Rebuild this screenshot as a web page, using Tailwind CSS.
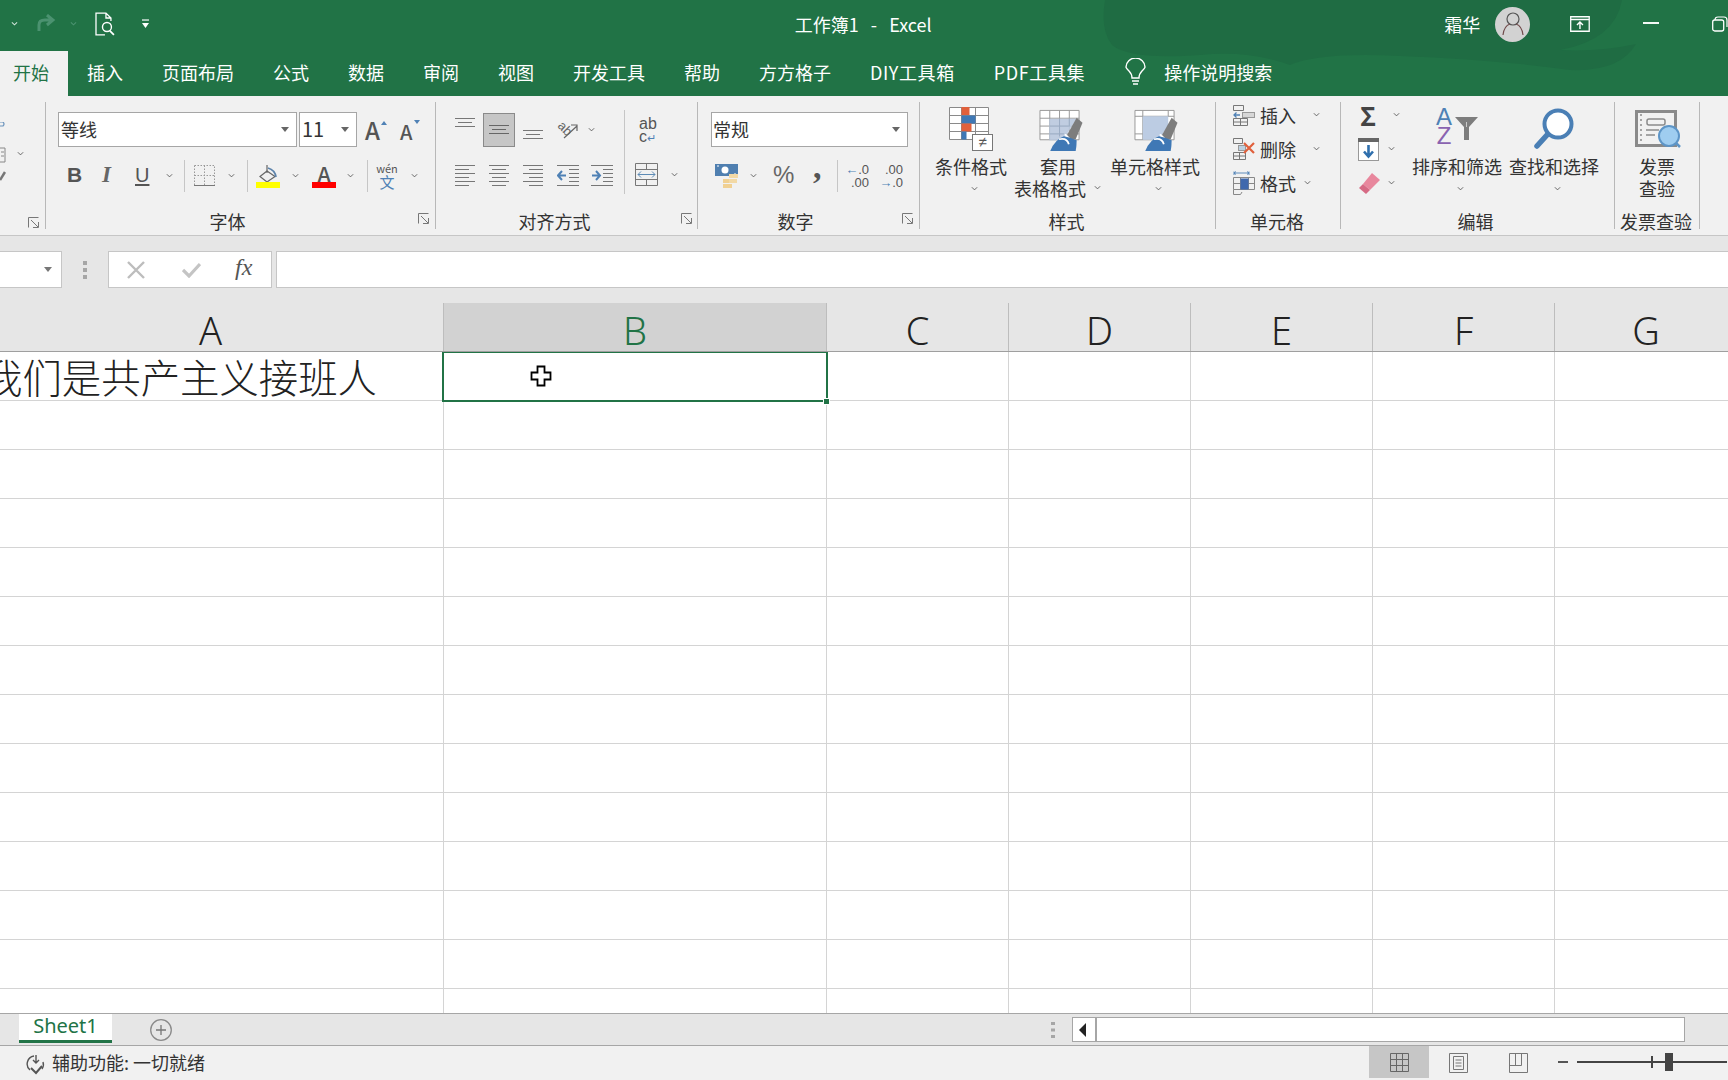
<!DOCTYPE html>
<html lang="zh">
<head>
<meta charset="utf-8">
<title>工作簿1 - Excel</title>
<script src="https://cdn.jsdelivr.net/npm/@tailwindcss/browser@4"></script>
</head>
<body class="m-0 bg-white">
<div class="w-[1728px] h-[1080px] overflow-hidden flex flex-col font-['Noto_Sans_CJK_SC','Noto_Sans',sans-serif] text-[#333] text-[18px]">

  <!-- Green header -->
  <div class="relative h-[96px] shrink-0 bg-[#217346] text-white">
    <svg class="absolute inset-0 w-[1728px] h-[96px]" viewBox="0 0 1728 96"><path d="M1105 0Q1100 30 1112 45Q1130 60 1200 55Q1250 50 1290 65Q1320 52 1400 56Q1500 60 1570 70Q1620 72 1636 44Q1600 52 1560 50Q1615 40 1622 0Z" fill="#1f6c43"/></svg>
    <div class="relative flex items-center h-[51px] pb-[3px]">
      <svg class="ml-[11px] w-[7px] h-[6px]" viewBox="0 0 8 6"><path d="M1 1l3 3 3-3" fill="none" stroke="#cfe3d8" stroke-width="1.2"/></svg>
      <svg class="ml-[18px] w-[20px] h-[20px]" viewBox="0 0 20 20"><path d="M3 17V11Q3 6 9 6H16M11 1l6 5-6 5" fill="none" stroke="#4b9270" stroke-width="3"/></svg>
      <svg class="ml-[14px] w-[7px] h-[6px]" viewBox="0 0 8 6"><path d="M1 1l3 3 3-3" fill="none" stroke="#4b9270" stroke-width="1.2"/></svg>
      <svg class="ml-[18px] w-[22px] h-[24px]" viewBox="0 0 22 24"><path d="M10 23H1V1H11L16 6V9M11 1V6H16" fill="none" stroke="#fff" stroke-width="1.3"/><circle cx="12" cy="15" r="4.5" fill="none" stroke="#fff" stroke-width="1.4"/><path d="M15 19l4 4" stroke="#fff" stroke-width="1.8"/></svg>
      <svg class="ml-[24px] w-[9px] h-[10px]" viewBox="0 0 9 10"><path d="M1 1H8" stroke="#fff" stroke-width="1.2"/><path d="M1 4H8L4.500 9Z" fill="#fff"/></svg>
      <div class="ml-[645px] w-[140px] text-[18px] leading-[24px] whitespace-pre">工作簿1   -   Excel</div>
      <div class="ml-[510px] w-[36px] text-[18px] leading-[24px] whitespace-nowrap">霜华</div>
      <div class="ml-[15px] w-[35px] h-[35px] rounded-full bg-[#d2d2d2] flex items-center justify-center">
        <svg class="w-[22px] h-[24px]" viewBox="0 0 22 24"><circle cx="11" cy="7" r="6" fill="none" stroke="#555" stroke-width="1.2"/><path d="M1 23Q2 14 8 12M21 23Q20 14 14 12" fill="none" stroke="#704a4a" stroke-width="1.2"/></svg>
      </div>
      <svg class="ml-[40px] w-[20px] h-[16px]" viewBox="0 0 20 16"><path d="M.7.7H19.300V15.300H.7ZM.7 3.500H19.300" fill="none" stroke="#fff" stroke-width="1.3"/><path d="M10 13V6.500M7 9l3-3 3 3" fill="none" stroke="#fff" stroke-width="1.4"/></svg>
      <div class="ml-[53px] w-[16px] h-[2px] bg-[#f3f8f5] -mt-[3px]"></div>
      <svg class="ml-[53px] w-[16px] h-[16px] shrink-0" viewBox="0 0 16 16"><path d="M3 4Q3 1 6 1H12Q15 1 15 4V11" fill="none" stroke="#fff" stroke-width="1.2"/><rect x=".7" y="4" width="11" height="11" rx="2" fill="none" stroke="#fff" stroke-width="1.3"/></svg>
    </div>
    <div class="relative flex items-center h-[45px] leading-[24px] text-[18px]">
      <div class="w-[68px] h-[45px] bg-[#f1f1f1] text-[#217346] flex items-center pl-[13px] pb-[4px]">开始</div>
      <div class="ml-[19px] flex items-center gap-[39px] whitespace-nowrap pb-[4px]">
        <span>插入</span><span>页面布局</span><span>公式</span><span>数据</span><span>审阅</span><span>视图</span><span>开发工具</span><span>帮助</span><span>方方格子</span><span class="tracking-[0.6px]">DIY工具箱</span><span class="tracking-[0.6px]">PDF工具集</span>
      </div>
      <svg class="ml-[40px] w-[21px] h-[28px] shrink-0 mb-[4px]" viewBox="0 0 21 28"><path d="M7 20Q7 16 4 13Q1 10 1 9A9 8.500 0 0 1 20 9Q20 10 17 13Q14 16 14 20Z" fill="none" stroke="#fff" stroke-width="1.4"/><path d="M7 23H14M8 26H13" stroke="#fff" stroke-width="1.6"/></svg>
      <span class="ml-[18px] whitespace-nowrap mb-[4px]">操作说明搜索</span>
    </div>
  </div>

  <!-- Ribbon -->
  <div class="h-[140px] shrink-0 bg-[#f1f1f1] border-b border-[#c6c6c6] flex pt-[6px]">

    <!-- Clipboard stub -->
    <div class="relative w-[46px] h-[127px] border-r border-[#b8b8b8] overflow-visible">
      <svg class="absolute left-0 top-[20px] w-[6px] h-[60px]" viewBox="0 0 6 60"><path d="M0 0H3Q5 2 3 4H0" fill="none" stroke="#6d95bd" stroke-width="1.2"/><path d="M0 26H5V40H0M1 30H4M1 34H4" fill="none" stroke="#888" stroke-width="1"/><path d="M0 58L5 50" stroke="#777" stroke-width="2.500"/></svg>
      <svg class="absolute left-[17px] top-[49px] w-[7px] h-[6px]" viewBox="0 0 8 6"><path d="M1 1l3 3 3-3" fill="none" stroke="#555"/></svg>
      <svg class="absolute right-[6px] bottom-[1px] w-[11px] h-[11px]" viewBox="0 0 11 11"><path d="M.5 10.500V.5H10.500M3 3l7 7M10.500 5V10.500H5" fill="none" stroke="#777"/></svg>
    </div>

    <!-- Font -->
    <div class="w-[390px] h-[127px] border-r border-[#b8b8b8] flex flex-col">
      <div class="h-[107px]">
        <div class="flex mt-[10px] ml-[12px] h-[35px] items-center">
          <div class="w-[239px] h-[35px] bg-white border border-[#a6a6a6] flex items-center justify-between pl-[2px] pr-[7px]"><span class="leading-[24px] -mt-[2px]">等线</span><svg class="w-[8px] h-[5px]" viewBox="0 0 8 5"><path d="M0 0H8L4 5Z" fill="#666"/></svg></div>
          <div class="ml-[2px] w-[58px] h-[35px] bg-white border border-[#a6a6a6] flex items-center justify-between pl-[2px] pr-[7px]"><span class="leading-[24px] text-[20px] -mt-[2px]">11</span><svg class="w-[8px] h-[5px]" viewBox="0 0 8 5"><path d="M0 0H8L4 5Z" fill="#666"/></svg></div>
          <span class="ml-[8px] w-[16px] text-[24px] leading-[28px] font-medium text-[#555]">A</span>
          <svg class="mb-[14px] w-[6px] h-[4px]" viewBox="0 0 6 4"><path d="M3 0L6 4H0Z" fill="#4f81b5"/></svg>
          <span class="ml-[13px] w-[14px] text-[20px] leading-[24px] mt-[4px] font-medium text-[#555]">A</span>
          <svg class="mb-[16px] w-[6px] h-[4px]" viewBox="0 0 6 4"><path d="M0 0H6L3 4Z" fill="#4f81b5"/></svg>
        </div>
        <div class="flex mt-[13px] ml-[12px] h-[32px] items-center">
          <span class="ml-[9px] w-[13px] text-[21px] leading-[24px] -mt-[2px] font-bold text-[#555] font-['Liberation_Sans',sans-serif]">B</span>
          <span class="ml-[22px] w-[11px] text-[23px] leading-[24px] -mt-[2px] italic font-bold text-[#666] font-['Liberation_Serif',serif]">I</span>
          <span class="ml-[22px] w-[13px] text-[20px] leading-[22px] -mt-[2px] underline underline-offset-2 font-medium text-[#555] font-['Liberation_Sans',sans-serif]">U</span>
          <svg class="ml-[18px] w-[7px] h-[6px]" viewBox="0 0 8 6"><path d="M1 1l3 3 3-3" fill="none" stroke="#555"/></svg>
          <div class="ml-[11px] w-px h-[32px] bg-[#c6c6c6]"></div>
          <svg class="ml-[9px] w-[21px] h-[21px] -mt-[2px]" viewBox="0 0 21 21"><path d="M.5.5H20.500V20M.5.5V20M.5 10.500H20.500M10.500.5V20" fill="none" stroke="#999" stroke-dasharray="1.500 1.500"/><path d="M0 20.500H21" stroke="#777"/></svg>
          <svg class="ml-[13px] w-[7px] h-[6px]" viewBox="0 0 8 6"><path d="M1 1l3 3 3-3" fill="none" stroke="#555"/></svg>
          <div class="ml-[12px] w-px h-[32px] bg-[#c6c6c6]"></div>
          <svg class="ml-[8px] w-[24px] h-[24px]" viewBox="0 0 24 24"><path d="M11 7L4 12.500 11 18 19 12.500Z" fill="none" stroke="#666" stroke-width="1.200"/><path d="M11 1V9" stroke="#666" stroke-width="1.200"/><path d="M12 4Q19 6 20 13" fill="none" stroke="#5d83ab" stroke-width="1.800"/><rect y="18" width="24" height="6" fill="#ffff00"/></svg>
          <svg class="ml-[12px] w-[7px] h-[6px]" viewBox="0 0 8 6"><path d="M1 1l3 3 3-3" fill="none" stroke="#555"/></svg>
          <div class="ml-[13px] w-[24px] h-[24px] flex flex-col items-center"><span class="text-[22px] leading-[18px] font-medium text-[#555]">A</span><span class="block w-[24px] h-[6px] bg-[#ff0000]"></span></div>
          <svg class="ml-[11px] w-[7px] h-[6px]" viewBox="0 0 8 6"><path d="M1 1l3 3 3-3" fill="none" stroke="#555"/></svg>
          <div class="ml-[13px] w-px h-[32px] bg-[#c6c6c6]"></div>
          <div class="ml-[9px] w-[20px] flex flex-col items-center"><span class="text-[11px] leading-[11px] text-[#555]">wén</span><span class="text-[15px] leading-[15px] text-[#4f81b5]">文</span></div>
          <svg class="ml-[14px] w-[7px] h-[6px]" viewBox="0 0 8 6"><path d="M1 1l3 3 3-3" fill="none" stroke="#555"/></svg>
        </div>
      </div>
      <div class="relative h-[24px] -mb-[4px] leading-[24px] text-center pr-[26px]">字体<svg class="absolute right-[6px] top-[4px] w-[11px] h-[11px]" viewBox="0 0 11 11"><path d="M.5 10.500V.5H10.500M3 3l7 7M10.500 5V10.500H5" fill="none" stroke="#777"/></svg></div>
    </div>

    <!-- Alignment -->
    <div class="w-[262px] h-[127px] border-r border-[#b8b8b8] flex flex-col">
      <div class="h-[107px] flex">
        <div class="w-[188px]">
          <div class="flex mt-[11px] h-[34px] items-center">
            <svg class="ml-[19px] w-[20px] h-[34px]" viewBox="0 0 20 34"><path d="M0 5.500H20M3 9.500H17M0 13.500H20" stroke="#777"/></svg>
            <div class="ml-[8px] w-[32px] h-[34px] bg-[#c6c6c6] border border-[#8a8a8a] flex items-center justify-center"><svg class="w-[20px] h-[10px]" viewBox="0 0 20 10"><path d="M0 .5H20M3 4.500H17M0 8.500H20" stroke="#666"/></svg></div>
            <svg class="ml-[8px] w-[20px] h-[34px]" viewBox="0 0 20 34"><path d="M0 17.500H20M3 21.500H17M0 25.500H20" stroke="#777"/></svg>
            <div class="relative ml-[15px] w-[20px] h-[20px] flex items-center justify-center">
              <span class="rotate-[45deg] text-[13px] leading-[13px] -translate-x-[3px] -translate-y-[2px] text-[#666] font-['Liberation_Sans',sans-serif]">ab</span>
              <svg class="absolute left-0 top-0 w-[20px] h-[20px]" viewBox="0 0 20 20"><path d="M6 18L19 6M13 5h6v6" fill="none" stroke="#666" stroke-width="1.200"/></svg>
            </div>
            <svg class="ml-[10px] w-[7px] h-[6px]" viewBox="0 0 8 6"><path d="M1 1l3 3 3-3" fill="none" stroke="#555"/></svg>
          </div>
          <div class="flex mt-[12px] h-[32px] items-center">
            <svg class="ml-[19px] w-[20px] h-[21px]" viewBox="0 0 20 21"><path d="M0 .5H20M0 4.500H14M0 8.500H20M0 12.500H14M0 16.500H20M0 20.500H14" stroke="#777"/></svg>
            <svg class="ml-[14px] w-[20px] h-[21px]" viewBox="0 0 20 21"><path d="M0 .5H20M3 4.500H17M0 8.500H20M3 12.500H17M0 16.500H20M3 20.500H17" stroke="#777"/></svg>
            <svg class="ml-[14px] w-[20px] h-[21px]" viewBox="0 0 20 21"><path d="M0 .5H20M6 4.500H20M0 8.500H20M6 12.500H20M0 16.500H20M6 20.500H20" stroke="#777"/></svg>
            <svg class="ml-[14px] w-[22px] h-[21px]" viewBox="0 0 22 21"><path d="M0 .5H22M12 4.500H22M12 8.500H22M12 12.500H22M12 16.500H22M0 20.500H22" stroke="#777"/><path d="M1 10.500H9M5 6l-4 4.500 4 4.500" fill="none" stroke="#4f81b5" stroke-width="2"/></svg>
            <svg class="ml-[12px] w-[22px] h-[21px]" viewBox="0 0 22 21"><path d="M0 .5H22M12 4.500H22M12 8.500H22M12 12.500H22M12 16.500H22M0 20.500H22" stroke="#777"/><path d="M1 10.500H9M5 6l4 4.500-4 4.500" fill="none" stroke="#4f81b5" stroke-width="2"/></svg>
          </div>
        </div>
        <div class="w-px h-[84px] mt-[8px] bg-[#c6c6c6]"></div>
        <div class="flex-1">
          <div class="mt-[16px] ml-[14px] w-[22px] h-[26px] flex flex-col text-[#555] font-['Liberation_Sans',sans-serif]"><span class="text-[16px] leading-[12px]">ab</span><span class="text-[16px] leading-[13px]">c<span class="text-[#4f81b5] text-[11px]">↵</span></span></div>
          <div class="flex mt-[19px] items-center">
            <svg class="ml-[10px] w-[23px] h-[23px]" viewBox="0 0 23 23"><path d="M.5.5H22.500V22.500H.5ZM.5 6.500H22.500M.5 16.500H22.500M11.500.5V6.500M11.500 16.500V22.500" fill="none" stroke="#777"/><path d="M3 11.500H20M6 8.500l-3 3 3 3M17 8.500l3 3-3 3" fill="none" stroke="#5d8bb5"/></svg>
            <svg class="ml-[13px] w-[7px] h-[6px]" viewBox="0 0 8 6"><path d="M1 1l3 3 3-3" fill="none" stroke="#555"/></svg>
          </div>
        </div>
      </div>
      <div class="relative h-[24px] -mb-[4px] leading-[24px] text-center pr-[24px]">对齐方式<svg class="absolute right-[5px] top-[4px] w-[11px] h-[11px]" viewBox="0 0 11 11"><path d="M.5 10.500V.5H10.500M3 3l7 7M10.500 5V10.500H5" fill="none" stroke="#777"/></svg></div>
    </div>

    <!-- Number -->
    <div class="w-[222px] h-[127px] border-r border-[#b8b8b8] flex flex-col">
      <div class="h-[107px]">
        <div class="mt-[10px] ml-[13px] w-[197px] h-[35px] bg-white border border-[#a6a6a6] flex items-center justify-between pl-[1px] pr-[7px]"><span class="leading-[24px] -mt-[2px]">常规</span><svg class="w-[8px] h-[5px]" viewBox="0 0 8 5"><path d="M0 0H8L4 5Z" fill="#666"/></svg></div>
        <div class="flex mt-[13px] h-[32px] items-center">
          <svg class="ml-[17px] w-[23px] h-[24px]" viewBox="0 0 23 24"><rect width="23" height="12" fill="#4f7fb0"/><ellipse cx="10" cy="6" rx="3.500" ry="3.500" fill="#fff"/><path d="M2 2H4M19 10H21" stroke="#fff"/><rect x="14" y="10" width="9" height="4" fill="#f2d9a6"/><rect x="8" y="15" width="9" height="4" fill="#f0d092"/><rect x="14" y="15" width="8" height="4" fill="#f2d9a6"/><rect x="8" y="20" width="9" height="4" fill="#f0d092"/></svg>
          <svg class="ml-[12px] w-[7px] h-[6px]" viewBox="0 0 8 6"><path d="M1 1l3 3 3-3" fill="none" stroke="#555"/></svg>
          <span class="ml-[16px] w-[20px] text-[24px] leading-[26px] -mt-[2px] text-[#666] font-['Liberation_Sans',sans-serif]">%</span>
          <span class="ml-[20px] w-[9px] text-[34px] leading-[26px] font-bold text-[#555] font-['Liberation_Serif',serif] -mt-[18px]">,</span>
          <div class="ml-[15px] w-px h-[32px] bg-[#c6c6c6]"></div>
          <div class="ml-[9px] w-[22px] flex flex-col items-end text-[13px] leading-[13px] text-[#555] font-['Liberation_Sans',sans-serif]"><span><span class="text-[#4f81b5] font-bold">←</span>.0</span><span>.00</span></div>
          <div class="ml-[12px] w-[22px] flex flex-col items-end text-[13px] leading-[13px] text-[#555] font-['Liberation_Sans',sans-serif]"><span>.00</span><span><span class="text-[#4f81b5] font-bold">→</span>.0</span></div>
        </div>
      </div>
      <div class="relative h-[24px] -mb-[4px] leading-[24px] text-center pr-[26px]">数字<svg class="absolute right-[6px] top-[4px] w-[11px] h-[11px]" viewBox="0 0 11 11"><path d="M.5 10.500V.5H10.500M3 3l7 7M10.500 5V10.500H5" fill="none" stroke="#777"/></svg></div>
    </div>

    <!-- Styles -->
    <div class="w-[296px] h-[127px] border-r border-[#b8b8b8] flex flex-col">
      <div class="h-[107px] flex">
        <div class="ml-[15px] w-[72px] pt-[5px] flex flex-col items-center">
          <svg class="w-[44px] h-[44px]" viewBox="0 0 44 44">
            <path d="M.5.5H39.500V32.500H.5ZM.5 8.500H39.500M.5 16.500H39.500M.5 24.500H39.500M12.500.5V32.500M26.500.5V32.500" fill="#fff" stroke="#8a8a8a"/>
            <rect x="12.500" y="0" width="8" height="8" fill="#e0603c"/><rect x="12.500" y="8.500" width="14" height="8" fill="#3f78b5"/><rect x="12.500" y="16.500" width="10" height="8" fill="#e0603c"/><rect x="12.500" y="24.500" width="5" height="8" fill="#3f78b5"/>
            <rect x="23.500" y="27.500" width="20" height="16" fill="#fff" stroke="#777"/>
            <text x="33.500" y="40" text-anchor="middle" font-size="15" fill="#555" font-family="Liberation Sans">≠</text>
          </svg>
          <span class="mt-[4px] leading-[22px] whitespace-nowrap">条件格式</span>
          <svg class="mt-[9px] ml-[6px] w-[7px] h-[6px]" viewBox="0 0 8 6"><path d="M1 1l3 3 3-3" fill="none" stroke="#555"/></svg>
        </div>
        <div class="ml-[7px] w-[86px] pt-[5px] flex flex-col items-start">
          <svg class="ml-[25px] w-[44px] h-[44px]" viewBox="0 0 44 45">
            <path d="M.5 3.500H40.500V33.500H.5ZM.5 11.500H40.500M.5 19.500H40.500M.5 27.500H40.500M10.500 3.500V33.500M20.500 3.500V33.500M30.500 3.500V33.500" fill="#fff" stroke="#999"/>
            <path d="M10 12H38L24 34H10Z" fill="#b9c8de" fill-opacity=".9"/>
            <path d="M10.500 19.500H30M20.500 12V30M30.500 12V20M10.500 27.500H25" stroke="#9bacc4"/>
            <path d="M44 16L37 33H32L28 29L38 11Z" fill="#7d7d7d"/><path d="M31 33L26 28" stroke="#fff" stroke-width="2"/>
            <path d="M11 45Q16 33 25 30Q31 31 38 34Q38 40 37 45Z" fill="#3f78b5"/><path d="M20 33Q28 31 30 38" fill="none" stroke="#fff" stroke-width="1.800"/>
          </svg>
          <span class="mt-[4px] ml-[26px] leading-[22px] whitespace-nowrap">套用</span>
          <div class="flex items-center leading-[22px] whitespace-nowrap">表格格式<svg class="ml-[8px] w-[7px] h-[6px]" viewBox="0 0 8 6"><path d="M1 1l3 3 3-3" fill="none" stroke="#555"/></svg></div>
        </div>
        <div class="ml-[10px] w-[90px] pt-[5px] flex flex-col items-center">
          <svg class="ml-[2px] w-[44px] h-[44px]" viewBox="0 0 44 45">
            <path d="M.5 3.500H40.500V33.500H.5ZM.5 9.500H40.500M8.500 3.500V33.500M34.500 3.500V9.500M.5 27.500H34" fill="#fff" stroke="#999"/>
            <path d="M8.500 9.500H34.500V20L24 33.500H8.500Z" fill="#bccce3"/>
            <path d="M44 16L37 33H32L28 29L38 11Z" fill="#7d7d7d"/><path d="M31 33L26 28" stroke="#fff" stroke-width="2"/>
            <path d="M11 45Q16 33 25 30Q31 31 38 34Q38 40 37 45Z" fill="#3f78b5"/><path d="M20 33Q28 31 30 38" fill="none" stroke="#fff" stroke-width="1.800"/>
          </svg>
          <span class="mt-[4px] leading-[22px] whitespace-nowrap">单元格样式</span>
          <svg class="mt-[9px] ml-[6px] w-[7px] h-[6px]" viewBox="0 0 8 6"><path d="M1 1l3 3 3-3" fill="none" stroke="#555"/></svg>
        </div>
      </div>
      <div class="h-[24px] -mb-[4px] leading-[24px] text-center pr-[2px]">样式</div>
    </div>

    <!-- Cells -->
    <div class="w-[125px] h-[127px] border-r border-[#b8b8b8] flex flex-col">
      <div class="h-[107px] pt-[1px]">
        <div class="flex items-center h-[24px]">
          <svg class="ml-[17px] w-[22px] h-[21px]" viewBox="0 0 22 21"><path d="M.5.5H10.500V5.500H.5ZM.5 13.500H14.500V20.500H.5ZM.5 17H14.500M7.500 13.500V20.500" fill="none" stroke="#777"/><rect x="9.500" y="7.500" width="12" height="5" fill="#d7d7d7" stroke="#999"/><path d="M1 10H7M3.500 7.500L1 10l2.500 2.500" fill="none" stroke="#4f81b5" stroke-width="1.300"/></svg>
          <span class="ml-[5px] w-[36px] leading-[24px]">插入</span>
          <svg class="ml-[17px] w-[7px] h-[6px]" viewBox="0 0 8 6"><path d="M1 1l3 3 3-3" fill="none" stroke="#555"/></svg>
        </div>
        <div class="flex items-center h-[24px] mt-[10px]">
          <svg class="ml-[17px] w-[22px] h-[22px]" viewBox="0 0 22 22"><path d="M.5.5H9.500V5.500H.5ZM.5 14.500H12.500V21.500H.5ZM.5 18H12.500M6.500 14.500V21.500" fill="none" stroke="#777"/><rect x="5.500" y="7.500" width="7" height="5" fill="#bcd0e0" stroke="#999"/><path d="M11 5L21 15M21 5L11 15" stroke="#e0603c" stroke-width="2.200"/></svg>
          <span class="ml-[5px] w-[36px] leading-[24px]">删除</span>
          <svg class="ml-[17px] w-[7px] h-[6px]" viewBox="0 0 8 6"><path d="M1 1l3 3 3-3" fill="none" stroke="#555"/></svg>
        </div>
        <div class="flex items-center h-[24px] mt-[10px]">
          <svg class="ml-[17px] w-[22px] h-[24px]" viewBox="0 0 22 24"><path d="M1 2H16M1 .5V4M16 .5V4M1 2l2-1.500M1 2l2 1.500M16 2l-2-1.500M16 2l-2 1.500" fill="none" stroke="#4f81b5" stroke-width=".9"/><path d="M.5 6.500H21.500V18.500H.5ZM7.500 6.500V18.500M15.500 6.500V18.500M.5 12.500H21.500M.5 18.500V23.500H7.500L9 21" fill="none" stroke="#888"/><rect x="7.500" y="7.500" width="8" height="11" fill="#3f68ad"/></svg>
          <span class="ml-[5px] w-[36px] leading-[24px]">格式</span>
          <svg class="ml-[8px] w-[7px] h-[6px]" viewBox="0 0 8 6"><path d="M1 1l3 3 3-3" fill="none" stroke="#555"/></svg>
        </div>
      </div>
      <div class="h-[24px] -mb-[4px] leading-[24px] text-center pr-[2px]">单元格</div>
    </div>

    <!-- Editing -->
    <div class="w-[274px] h-[127px] border-r border-[#b8b8b8] flex flex-col">
      <div class="h-[107px] flex">
        <div class="w-[71px] pt-[1px]">
          <div class="flex items-center h-[24px]">
            <span class="ml-[19px] w-[17px] text-[26px] leading-[24px] font-bold text-[#444]">Σ</span>
            <svg class="ml-[16px] w-[7px] h-[6px]" viewBox="0 0 8 6"><path d="M1 1l3 3 3-3" fill="none" stroke="#555"/></svg>
          </div>
          <div class="flex items-center h-[24px] mt-[10px]">
            <svg class="ml-[17px] w-[21px] h-[23px]" viewBox="0 0 21 23"><rect x=".5" y=".5" width="20" height="22" fill="#fff" stroke="#999"/><rect width="21" height="4" fill="#666"/><path d="M10.500 7V18M6 13.500l4.500 5 4.500-5" fill="none" stroke="#2f6fad" stroke-width="2.600"/></svg>
            <svg class="ml-[9px] w-[7px] h-[6px]" viewBox="0 0 8 6"><path d="M1 1l3 3 3-3" fill="none" stroke="#555"/></svg>
          </div>
          <div class="flex items-center h-[24px] mt-[10px]">
            <svg class="ml-[18px] w-[21px] h-[21px]" viewBox="0 0 21 21"><path d="M13 0L21 7 11 17 4 11Z" fill="#e8879d"/><path d="M4 11L11 17 7 21 0 15Z" fill="#d66a84"/></svg>
            <svg class="ml-[8px] w-[7px] h-[6px]" viewBox="0 0 8 6"><path d="M1 1l3 3 3-3" fill="none" stroke="#555"/></svg>
          </div>
        </div>
        <div class="w-[90px] pt-[5px] flex flex-col items-center">
          <div class="h-[44px] w-[42px] flex items-start">
            <div class="w-[16px] flex flex-col items-center text-[24px] leading-[19px] font-['Liberation_Sans',sans-serif]"><span class="text-[#4f81b5]">A</span><span class="text-[#8a63b0]">Z</span></div>
            <svg class="ml-[3px] mt-[10px] w-[23px] h-[23px]" viewBox="0 0 23 23"><path d="M0 0H23L14 10V23H9V10Z" fill="#7d7d7d"/><path d="M11.500 5V10" stroke="#fff" stroke-width=".6"/></svg>
          </div>
          <span class="mt-[4px] leading-[22px] whitespace-nowrap">排序和筛选</span>
          <svg class="mt-[9px] ml-[6px] w-[7px] h-[6px]" viewBox="0 0 8 6"><path d="M1 1l3 3 3-3" fill="none" stroke="#555"/></svg>
        </div>
        <div class="ml-[7px] w-[90px] pt-[4px] flex flex-col items-center">
          <svg class="w-[44px] h-[44px]" viewBox="0 0 44 44"><circle cx="26" cy="18" r="13.500" fill="#fff" stroke="#4a7fb5" stroke-width="4"/><path d="M15 29L5 40" stroke="#4a7fb5" stroke-width="5.500" stroke-linecap="round"/></svg>
          <span class="mt-[5px] leading-[22px] whitespace-nowrap">查找和选择</span>
          <svg class="mt-[9px] ml-[6px] w-[7px] h-[6px]" viewBox="0 0 8 6"><path d="M1 1l3 3 3-3" fill="none" stroke="#555"/></svg>
        </div>
      </div>
      <div class="h-[24px] -mb-[4px] leading-[24px] text-center pr-[4px]">编辑</div>
    </div>

    <!-- Invoice -->
    <div class="w-[85px] h-[127px] border-r border-[#b8b8b8] flex flex-col">
      <div class="h-[107px] pt-[8px] flex flex-col items-center">
        <svg class="w-[46px] h-[38px] ml-[2px]" viewBox="0 0 46 38">
          <path d="M1.500 1.500H40.500V35.500H1.500Z" fill="#f1f1f1" stroke="#8a8a8a" stroke-width="3"/>
          <path d="M6 4V34" stroke="#8a8a8a" stroke-dasharray="2 3" stroke-width="1.500"/>
          <rect x="12" y="9" width="18" height="6" rx="2" fill="none" stroke="#8a8a8a" stroke-width="1.500"/>
          <path d="M11 20H24M11 25H20" stroke="#8a8a8a" stroke-width="1.500"/>
          <circle cx="34" cy="26" r="10" fill="#9fcdf0" stroke="#5d95c7" stroke-width="2"/>
          <path d="M41 33L45 37" stroke="#5d95c7" stroke-width="2.500"/>
        </svg>
        <span class="mt-[7px] leading-[22px] whitespace-nowrap">发票</span>
        <span class="leading-[22px] whitespace-nowrap">查验</span>
      </div>
      <div class="h-[24px] -mb-[4px] leading-[24px] text-center whitespace-nowrap pr-[2px]">发票查验</div>
    </div>
  </div>

  <!-- Formula bar -->
  <div class="h-[67px] shrink-0 bg-[#e6e6e6] flex pt-[15px]">
    <div class="w-[62px] h-[37px] bg-white border border-l-0 border-[#c6c6c6] flex items-center justify-end pr-[9px]"><svg class="w-[8px] h-[5px]" viewBox="0 0 8 5"><path d="M0 0H8L4 5Z" fill="#777"/></svg></div>
    <div class="w-[46px] h-[37px] flex items-center justify-center"><svg class="w-[4px] h-[18px]" viewBox="0 0 4 18"><path d="M0 0H4V4H0ZM0 7H4V11H0ZM0 14H4V18H0Z" fill="#a6a6a6"/></svg></div>
    <div class="w-[164px] h-[37px] bg-white border border-[#c6c6c6] flex items-center">
      <svg class="ml-[18px] w-[18px] h-[18px]" viewBox="0 0 18 18"><path d="M1 1L17 17M17 1L1 17" stroke="#bdbdbd" stroke-width="2.400"/></svg>
      <svg class="ml-[37px] w-[19px] h-[16px]" viewBox="0 0 19 16"><path d="M1 8L7 14L18 2" fill="none" stroke="#c4c4c4" stroke-width="3.200"/></svg>
      <span class="ml-[34px] text-[24px] leading-[26px] -mt-[6px] italic text-[#555] font-['Liberation_Serif',serif]">fx</span>
    </div>
    <div class="ml-[4px] flex-1 h-[37px] bg-white border border-r-0 border-[#c6c6c6]"></div>
  </div>

  <!-- Sheet -->
  <div class="flex flex-col flex-1 min-h-0 bg-white">
    <div class="h-[49px] shrink-0 bg-[#e6e6e6] border-b border-[#9f9f9f] grid grid-cols-[444px_383px_182px_182px_182px_182px_182px_91px] grid-rows-[48px] text-[38px] leading-[54px] font-['Noto_Sans',sans-serif] font-light text-[#222]">
      <div class="border-r border-[#bdbdbd] text-center pr-[22px]">A</div>
      <div class="bg-[#d2d2d2] border-r border-[#bdbdbd] text-center text-[#217346]">B</div>
      <div class="border-r border-[#bdbdbd] text-center">C</div>
      <div class="border-r border-[#bdbdbd] text-center">D</div>
      <div class="border-r border-[#bdbdbd] text-center">E</div>
      <div class="border-r border-[#bdbdbd] text-center">F</div>
      <div class="text-center">G</div>
      <div></div>
    </div>
    <div class="relative flex-1 min-h-0 overflow-hidden">
      <div class="grid grid-cols-[444px_383px_182px_182px_182px_182px_182px_91px] auto-rows-[49px]">
        <div class="border-r border-b border-[#d4d4d4] flex items-center justify-end pr-[66px] whitespace-nowrap text-[39.4px] leading-[48px] font-light text-[#222]">我们是共产主义接班人</div>
        <div class="border-r border-b border-[#d4d4d4]"></div><div class="border-r border-b border-[#d4d4d4]"></div><div class="border-r border-b border-[#d4d4d4]"></div><div class="border-r border-b border-[#d4d4d4]"></div><div class="border-r border-b border-[#d4d4d4]"></div><div class="border-r border-b border-[#d4d4d4]"></div><div class="border-b border-[#d4d4d4]"></div>
        <div class="border-r border-b border-[#d4d4d4]"></div><div class="border-r border-b border-[#d4d4d4]"></div><div class="border-r border-b border-[#d4d4d4]"></div><div class="border-r border-b border-[#d4d4d4]"></div><div class="border-r border-b border-[#d4d4d4]"></div><div class="border-r border-b border-[#d4d4d4]"></div><div class="border-r border-b border-[#d4d4d4]"></div><div class="border-b border-[#d4d4d4]"></div>
        <div class="border-r border-b border-[#d4d4d4]"></div><div class="border-r border-b border-[#d4d4d4]"></div><div class="border-r border-b border-[#d4d4d4]"></div><div class="border-r border-b border-[#d4d4d4]"></div><div class="border-r border-b border-[#d4d4d4]"></div><div class="border-r border-b border-[#d4d4d4]"></div><div class="border-r border-b border-[#d4d4d4]"></div><div class="border-b border-[#d4d4d4]"></div>
        <div class="border-r border-b border-[#d4d4d4]"></div><div class="border-r border-b border-[#d4d4d4]"></div><div class="border-r border-b border-[#d4d4d4]"></div><div class="border-r border-b border-[#d4d4d4]"></div><div class="border-r border-b border-[#d4d4d4]"></div><div class="border-r border-b border-[#d4d4d4]"></div><div class="border-r border-b border-[#d4d4d4]"></div><div class="border-b border-[#d4d4d4]"></div>
        <div class="border-r border-b border-[#d4d4d4]"></div><div class="border-r border-b border-[#d4d4d4]"></div><div class="border-r border-b border-[#d4d4d4]"></div><div class="border-r border-b border-[#d4d4d4]"></div><div class="border-r border-b border-[#d4d4d4]"></div><div class="border-r border-b border-[#d4d4d4]"></div><div class="border-r border-b border-[#d4d4d4]"></div><div class="border-b border-[#d4d4d4]"></div>
        <div class="border-r border-b border-[#d4d4d4]"></div><div class="border-r border-b border-[#d4d4d4]"></div><div class="border-r border-b border-[#d4d4d4]"></div><div class="border-r border-b border-[#d4d4d4]"></div><div class="border-r border-b border-[#d4d4d4]"></div><div class="border-r border-b border-[#d4d4d4]"></div><div class="border-r border-b border-[#d4d4d4]"></div><div class="border-b border-[#d4d4d4]"></div>
        <div class="border-r border-b border-[#d4d4d4]"></div><div class="border-r border-b border-[#d4d4d4]"></div><div class="border-r border-b border-[#d4d4d4]"></div><div class="border-r border-b border-[#d4d4d4]"></div><div class="border-r border-b border-[#d4d4d4]"></div><div class="border-r border-b border-[#d4d4d4]"></div><div class="border-r border-b border-[#d4d4d4]"></div><div class="border-b border-[#d4d4d4]"></div>
        <div class="border-r border-b border-[#d4d4d4]"></div><div class="border-r border-b border-[#d4d4d4]"></div><div class="border-r border-b border-[#d4d4d4]"></div><div class="border-r border-b border-[#d4d4d4]"></div><div class="border-r border-b border-[#d4d4d4]"></div><div class="border-r border-b border-[#d4d4d4]"></div><div class="border-r border-b border-[#d4d4d4]"></div><div class="border-b border-[#d4d4d4]"></div>
        <div class="border-r border-b border-[#d4d4d4]"></div><div class="border-r border-b border-[#d4d4d4]"></div><div class="border-r border-b border-[#d4d4d4]"></div><div class="border-r border-b border-[#d4d4d4]"></div><div class="border-r border-b border-[#d4d4d4]"></div><div class="border-r border-b border-[#d4d4d4]"></div><div class="border-r border-b border-[#d4d4d4]"></div><div class="border-b border-[#d4d4d4]"></div>
        <div class="border-r border-b border-[#d4d4d4]"></div><div class="border-r border-b border-[#d4d4d4]"></div><div class="border-r border-b border-[#d4d4d4]"></div><div class="border-r border-b border-[#d4d4d4]"></div><div class="border-r border-b border-[#d4d4d4]"></div><div class="border-r border-b border-[#d4d4d4]"></div><div class="border-r border-b border-[#d4d4d4]"></div><div class="border-b border-[#d4d4d4]"></div>
        <div class="border-r border-b border-[#d4d4d4]"></div><div class="border-r border-b border-[#d4d4d4]"></div><div class="border-r border-b border-[#d4d4d4]"></div><div class="border-r border-b border-[#d4d4d4]"></div><div class="border-r border-b border-[#d4d4d4]"></div><div class="border-r border-b border-[#d4d4d4]"></div><div class="border-r border-b border-[#d4d4d4]"></div><div class="border-b border-[#d4d4d4]"></div>
        <div class="border-r border-b border-[#d4d4d4]"></div><div class="border-r border-b border-[#d4d4d4]"></div><div class="border-r border-b border-[#d4d4d4]"></div><div class="border-r border-b border-[#d4d4d4]"></div><div class="border-r border-b border-[#d4d4d4]"></div><div class="border-r border-b border-[#d4d4d4]"></div><div class="border-r border-b border-[#d4d4d4]"></div><div class="border-b border-[#d4d4d4]"></div>
        <div class="border-r border-b border-[#d4d4d4]"></div><div class="border-r border-b border-[#d4d4d4]"></div><div class="border-r border-b border-[#d4d4d4]"></div><div class="border-r border-b border-[#d4d4d4]"></div><div class="border-r border-b border-[#d4d4d4]"></div><div class="border-r border-b border-[#d4d4d4]"></div><div class="border-r border-b border-[#d4d4d4]"></div><div class="border-b border-[#d4d4d4]"></div>
        <div class="border-r border-b border-[#d4d4d4]"></div><div class="border-r border-b border-[#d4d4d4]"></div><div class="border-r border-b border-[#d4d4d4]"></div><div class="border-r border-b border-[#d4d4d4]"></div><div class="border-r border-b border-[#d4d4d4]"></div><div class="border-r border-b border-[#d4d4d4]"></div><div class="border-r border-b border-[#d4d4d4]"></div><div class="border-b border-[#d4d4d4]"></div>
      </div>
      <!-- Selected cell -->
      <div class="absolute left-[442px] top-[-1px] w-[386px] h-[51px] border-2 border-[#217346]"></div>
      <div class="absolute left-[823px] top-[46px] w-[7px] h-[7px] bg-[#217346] border border-white"></div>
      <svg class="absolute left-[530px] top-[13px] w-[22px] h-[22px]" viewBox="0 0 22 22"><path d="M7.500 1.500H14.500V7.500H20.500V14.500H14.500V20.500H7.500V14.500H1.500V7.500H7.500Z" fill="#fff" stroke="#000" stroke-width="1.800"/></svg>
    </div>
  </div>

  <!-- Sheet tabs -->
  <div class="h-[33px] shrink-0 bg-[#e6e6e6] border-t border-b border-[#a6a6a6] flex">
    <div class="ml-[19px] w-[93px] h-[29px] bg-white border-b-[3px] border-[#217346] text-[#217346] text-[20px] leading-[24px] text-center font-['Noto_Sans',sans-serif]">Sheet1</div>
    <svg class="ml-[38px] mt-[5px] w-[22px] h-[22px]" viewBox="0 0 22 22"><circle cx="11" cy="11" r="10.300" fill="none" stroke="#8a8a8a" stroke-width="1.300"/><path d="M11 6V16M6 11H16" stroke="#777" stroke-width="1.300"/></svg>
    <svg class="ml-[879px] mt-[8px] w-[4px] h-[16px]" viewBox="0 0 4 16"><path d="M0 0H4V3H0ZM0 6.500H4V9.500H0ZM0 13H4V16H0Z" fill="#a6a6a6"/></svg>
    <div class="ml-[17px] mt-[3px] w-[613px] h-[25px] bg-white border border-[#a6a6a6] flex">
      <div class="w-[24px] h-[23px] border-r-2 border-[#a6a6a6] flex items-center justify-center"><svg class="w-[7px] h-[14px] -ml-[3px]" viewBox="0 0 7 14"><path d="M7 0V14L0 7Z" fill="#222"/></svg></div>
    </div>
  </div>

  <!-- Status bar -->
  <div class="h-[34px] shrink-0 bg-[#f1f1f1] flex items-start relative">
    <svg class="ml-[26px] mt-[8px] w-[21px] h-[21px]" viewBox="0 0 21 21"><path d="M8 2A8 8 0 0 0 4 16" fill="none" stroke="#555" stroke-width="1.400"/><path d="M10 1V9M7 6l3 3 3-3M17 8A8 8 0 0 1 16 15" fill="none" stroke="#555" stroke-width="1.400"/><path d="M5 14l5 5 6-7" fill="none" stroke="#555" stroke-width="2"/></svg>
    <span class="ml-[5px] mt-[4px] text-[18px] leading-[24px] whitespace-nowrap text-[#333]">辅助功能: 一切就绪</span>
    <div class="ml-[1164px] w-[60px] h-[32px] bg-[#c6c6c6] flex items-center justify-center shrink-0"><svg class="w-[19px] h-[19px]" viewBox="0 0 19 19"><path d="M.5.5H18.500V18.500H.5ZM6.500.5V18.500M12.500.5V18.500M.5 6.500H18.500M.5 12.500H18.500" fill="none" stroke="#666"/></svg></div>
    <svg class="ml-[20px] mt-[7px] w-[19px] h-[20px] shrink-0" viewBox="0 0 19 20"><path d="M.5.5H18.500V19.500H.5ZM4.500 3.500H14.500V16.500H4.500ZM6.500 7H12.500M6.500 10H12.500M6.500 13H12.500" fill="none" stroke="#777"/></svg>
    <svg class="ml-[41px] mt-[7px] w-[19px] h-[20px] shrink-0" viewBox="0 0 19 20"><path d="M.5.5H18.500V19.500H.5ZM.5 12.500H12.500V.5M6.500.5V12.500" fill="none" stroke="#777"/></svg>
    <div class="ml-[30px] mt-[15px] w-[10px] h-[2px] bg-[#555] shrink-0"></div>
    <div class="relative ml-[9px] mt-[15px] w-[150px] h-[2px] bg-[#444] shrink-0">
      <div class="absolute left-[74px] top-[-5px] w-[2px] h-[12px] bg-[#444]"></div>
      <div class="absolute left-[88px] top-[-8px] w-[8px] h-[18px] bg-[#444]"></div>
    </div>
  </div>
</div>
</body>
</html>
